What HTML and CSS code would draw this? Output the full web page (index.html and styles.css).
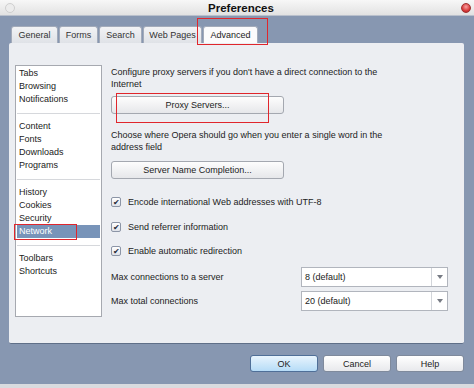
FILE: index.html
```html
<!DOCTYPE html>
<html lang="en">
<head>
    <meta charset="UTF-8">
    <title>Preferences</title>
    <link rel="stylesheet" href="styles.css">
</head>
<body>
    <div class="titlebar">
        <span class="dot dot-idle"></span>
        <span class="title">Preferences</span>
        <span class="dot dot-close"></span>
    </div>

    <div class="window">
        <div class="tabs">
            <div class="tab tab-general">General</div>
            <div class="tab tab-forms">Forms</div>
            <div class="tab tab-search">Search</div>
            <div class="tab tab-web">Web Pages</div>
            <div class="tab tab-advanced active">Advanced
                <span class="mark mark-tab"></span>
            </div>
        </div>

        <div class="panel">
            <div class="sidebar">
                <div class="group">
                    <div class="item">Tabs</div>
                    <div class="item">Browsing</div>
                    <div class="item">Notifications</div>
                </div>
                <div class="group">
                    <div class="item">Content</div>
                    <div class="item">Fonts</div>
                    <div class="item">Downloads</div>
                    <div class="item">Programs</div>
                </div>
                <div class="group">
                    <div class="item">History</div>
                    <div class="item">Cookies</div>
                    <div class="item">Security</div>
                    <div class="item selected">Network
                        <span class="mark mark-network"></span>
                    </div>
                </div>
                <div class="group">
                    <div class="item">Toolbars</div>
                    <div class="item">Shortcuts</div>
                </div>
            </div>

            <div class="content">
                <p class="note">Configure proxy servers if you don't have a direct connection to the Internet</p>
                <div class="btn-wrap">
                    <button class="wide-btn">Proxy Servers...</button>
                    <span class="mark mark-proxy"></span>
                </div>

                <p class="note note-second">Choose where Opera should go when you enter a single word in the address field</p>
                <button class="wide-btn">Server Name Completion...</button>

                <div class="checks">
                    <label class="check"><span class="box">&#10004;</span>Encode international Web addresses with UTF-8</label>
                    <label class="check"><span class="box">&#10004;</span>Send referrer information</label>
                    <label class="check"><span class="box">&#10004;</span>Enable automatic redirection</label>
                </div>

                <div class="field">
                    <span class="field-label">Max connections to a server</span>
                    <div class="select"><span>8 (default)</span><span class="arrow"></span></div>
                </div>
                <div class="field">
                    <span class="field-label">Max total connections</span>
                    <div class="select"><span>20 (default)</span><span class="arrow"></span></div>
                </div>
            </div>
        </div>

        <div class="actions">
            <button class="dlg-btn default">OK</button>
            <button class="dlg-btn">Cancel</button>
            <button class="dlg-btn">Help</button>
        </div>
    </div>

    <div class="statusbar"></div>
</body>
</html>
```

FILE: styles.css
```css
body {
    margin: 0;
    width: 474px;
    height: 388px;
    overflow: hidden;
    font-family: "Liberation Sans", Arial, sans-serif;
    font-size: 9px;
    color: #222222;
    background-color: #8797b1;
}
.titlebar {
    height: 16px;
    display: flex;
    justify-content: space-between;
    align-items: center;
    padding: 0 3px 0 5px;
    background: linear-gradient(#f7f7f7, #e2e2e2);
    border-bottom: 1px solid #b9c0cc;
    box-sizing: border-box;
}
.title {
    font-size: 11.5px;
    font-weight: bold;
    color: #111111;
    margin-left: 6px;
}
.dot {
    width: 10px;
    height: 10px;
    border-radius: 50%;
    box-sizing: border-box;
}
.dot-idle {
    border: 1px solid #cfcfcf;
    background: #ececec;
}
.dot-close {
    background: radial-gradient(circle at 50% 35%, #f7a1a1, #d83a3a 60%, #a82020);
    border: 1px solid #9e3030;
}
.window {
    padding: 0 10px 0 9px;
}
.tabs {
    display: flex;
    gap: 1px;
    margin: 10px 0 0 2px;
    height: 17px;
}
.tab {
    position: relative;
    height: 17px;
    line-height: 17px;
    text-align: center;
    color: #333333;
    background: linear-gradient(#f2f3f5, #dfe2e7);
    border: 1px solid #a3abba;
    border-bottom: none;
    border-radius: 3px 3px 0 0;
    box-sizing: border-box;
}
.tab-general { width: 47px; }
.tab-forms { width: 39px; }
.tab-search { width: 43px; }
.tab-web { width: 59px; }
.tab-advanced { width: 55px; }
.tab.active {
    background: #fbfbfc;
    color: #222222;
}
.mark {
    position: absolute;
    border: 1.5px solid #e0262c;
    box-sizing: border-box;
}
.mark-tab {
    left: -7px;
    top: -9px;
    width: 71px;
    height: 27px;
}
.panel {
    display: flex;
    height: 301px;
    background-color: #eceef2;
    border-radius: 2px;
    border-bottom: 1px solid #5f6f88;
    box-sizing: border-box;
}
.sidebar {
    width: 87px;
    height: 252px;
    margin: 22px 0 0 6px;
    padding-top: 1px;
    background: #ffffff;
    border: 1px solid #a6a9b0;
    box-sizing: border-box;
}
.group {
    border-bottom: 1px solid #d6d8dc;
    margin: 0 1px;
    padding-bottom: 7px;
    margin-bottom: 6px;
}
.group:last-child {
    border-bottom: none;
}
.item {
    position: relative;
    height: 13px;
    line-height: 13px;
    padding-left: 2px;
    color: #222222;
}
.item.selected {
    background-color: #7894b9;
    color: #ffffff;
}
.mark-network {
    left: -3px;
    top: -1px;
    width: 63px;
    height: 16px;
}
.content {
    margin: 23px 0 0 9px;
    width: 340px;
}
.note {
    margin: 0;
    line-height: 12px;
    width: 280px;
}
.note-second {
    margin-top: 15px;
}
.btn-wrap {
    position: relative;
}
.wide-btn {
    display: block;
    width: 173px;
    height: 18px;
    margin-top: 6px;
    padding: 0;
    font-family: "Liberation Sans", Arial, sans-serif;
    font-size: 9px;
    color: #222222;
    background: linear-gradient(#fdfdfd, #e6e7ea);
    border: 1px solid #a4a8b0;
    border-radius: 3px;
}
.note-second + .wide-btn {
    margin-top: 8px;
}
.mark-proxy {
    left: 5px;
    top: -3px;
    width: 153px;
    height: 30px;
}
.checks {
    margin-top: 18px;
}
.check {
    display: flex;
    align-items: center;
    height: 10px;
    margin-bottom: 14.5px;
}
.box {
    width: 10px;
    height: 10px;
    margin-right: 7px;
    font-size: 8px;
    line-height: 10px;
    text-align: center;
    color: #1d2a3a;
    background: linear-gradient(#ffffff, #dfe2e8);
    border: 1px solid #8c95a6;
    border-radius: 2px;
    box-sizing: border-box;
}
.field {
    display: flex;
    align-items: center;
    justify-content: space-between;
    height: 20px;
    margin-bottom: 4px;
    width: 337px;
}
.checks + .field {
    margin-top: -4px;
}
.select {
    display: flex;
    justify-content: space-between;
    align-items: center;
    width: 147px;
    height: 20px;
    padding-left: 3px;
    background: #ffffff;
    border: 1px solid #b1b5bd;
    box-sizing: border-box;
}
.arrow {
    width: 15px;
    height: 18px;
    border-left: 1px solid #d2d5da;
    position: relative;
}
.arrow::after {
    content: "";
    position: absolute;
    left: 5px;
    top: 7px;
    border-left: 3px solid transparent;
    border-right: 3px solid transparent;
    border-top: 4px solid #777b84;
}
.actions {
    display: flex;
    justify-content: flex-end;
    gap: 5px;
    margin-top: 11px;
}
.dlg-btn {
    width: 68px;
    height: 17px;
    padding: 0;
    font-family: "Liberation Sans", Arial, sans-serif;
    font-size: 9px;
    color: #222222;
    background: linear-gradient(#ffffff, #e8e9ec);
    border: 1px solid #7f8a9c;
    border-radius: 3px;
}
.dlg-btn.default {
    background: linear-gradient(#e8f4fd, #b6dcf7);
    border-color: #4f6f98;
}
.statusbar {
    height: 4px;
    margin-top: 12px;
    background: #d9dbdf;
}
```
